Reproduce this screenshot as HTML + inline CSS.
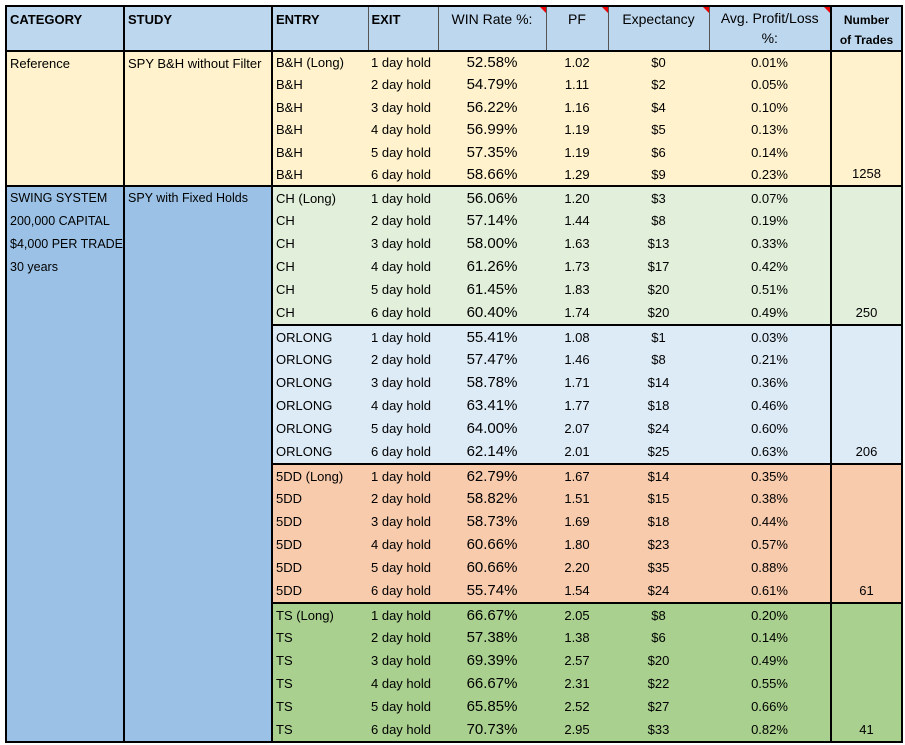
<!DOCTYPE html>
<html><head><meta charset="utf-8"><style>
html,body{margin:0;padding:0;background:#fff;width:905px;height:745px;overflow:hidden}
table{position:absolute;left:5px;top:5px;width:896px;border-collapse:collapse;table-layout:fixed;font-family:"Liberation Sans",sans-serif;font-size:13px;color:#000;border:2px solid #000}
td{padding:0 0 0 3px;white-space:nowrap;overflow:hidden;line-height:15px}
.h td{background:#bdd7ee;font-weight:bold;vertical-align:top;padding-top:5px;height:38px;border-left:1px solid #555;position:relative}
.h td.n{font-weight:normal;text-align:center;padding-left:0}
.h td.tri:after{content:"";position:absolute;right:0;top:0;border-top:6px solid #e00;border-left:6px solid transparent}
.tk{border-left:2px solid #000!important}
.g{border-top:2px solid #000}
.c{text-align:center;padding-left:0;font-size:13px}
.w{text-align:center;padding-left:0;font-size:15px}
.nb{text-align:center;padding-left:0;vertical-align:bottom;padding-bottom:4px;border-left:2px solid #000;font-size:13px}
td.cat{vertical-align:top;background:#9bc2e6!important;border-left:2px solid #000;padding-top:4px;font-size:12.5px}
.cat div{height:23px;line-height:15px}
.y td{background:#fff2cc}.gr td{background:#e2efda}.bl td{background:#ddebf7}.or td{background:#f8cbad}.gn td{background:#a9d08e}
</style></head><body>
<table>
<colgroup><col style="width:118px"><col style="width:148px"><col style="width:96px"><col style="width:70px"><col style="width:108px"><col style="width:62px"><col style="width:101px"><col style="width:122px"><col style="width:71px"></colgroup>
<tr class="h"><td style="border-left:none">CATEGORY</td><td class="tk">STUDY</td><td class="tk">ENTRY</td><td>EXIT</td><td class="n tri" style="font-size:14px">WIN Rate %:</td><td class="n tri" style="font-size:14px">PF</td><td class="n tri" style="font-size:14px">Expectancy</td><td class="n tri" style="font-size:14px;line-height:20px;padding-top:1px">Avg. Profit/Loss<br>%:</td><td class="tk" style="text-align:center;padding:3px 0 0;font-size:12px;line-height:20px">Number<br>of Trades</td></tr>
<tr class="y g" style="height:22px"><td rowspan="6" style="vertical-align:top;padding-top:4px">Reference</td><td rowspan="6" class="tk" style="vertical-align:top;padding-top:4px">SPY B&amp;H without Filter</td><td class="tk">B&amp;H (Long)</td><td>1 day hold</td><td class="w">52.58%</td><td class="c">1.02</td><td class="c">$0</td><td class="c">0.01%</td><td rowspan="6" class="nb">1258</td></tr>
<tr class="y" style="height:23px"><td class="tk">B&amp;H</td><td>2 day hold</td><td class="w">54.79%</td><td class="c">1.11</td><td class="c">$2</td><td class="c">0.05%</td></tr>
<tr class="y" style="height:22px"><td class="tk">B&amp;H</td><td>3 day hold</td><td class="w">56.22%</td><td class="c">1.16</td><td class="c">$4</td><td class="c">0.10%</td></tr>
<tr class="y" style="height:23px"><td class="tk">B&amp;H</td><td>4 day hold</td><td class="w">56.99%</td><td class="c">1.19</td><td class="c">$5</td><td class="c">0.13%</td></tr>
<tr class="y" style="height:22px"><td class="tk">B&amp;H</td><td>5 day hold</td><td class="w">57.35%</td><td class="c">1.19</td><td class="c">$6</td><td class="c">0.14%</td></tr>
<tr class="y" style="height:23px"><td class="tk">B&amp;H</td><td>6 day hold</td><td class="w">58.66%</td><td class="c">1.29</td><td class="c">$9</td><td class="c">0.23%</td></tr>

<tr class="gr g" style="height:23px"><td rowspan="24" class="cat" style="border-left:none"><div>SWING SYSTEM</div><div>200,000 CAPITAL</div><div>$4,000 PER TRADE</div><div>30 years</div></td><td rowspan="24" class="cat"><div>SPY with Fixed Holds</div></td><td class="tk">CH (Long)</td><td>1 day hold</td><td class="w">56.06%</td><td class="c">1.20</td><td class="c">$3</td><td class="c">0.07%</td><td rowspan="6" class="nb">250</td></tr>
<tr class="gr" style="height:23px"><td class="tk">CH</td><td>2 day hold</td><td class="w">57.14%</td><td class="c">1.44</td><td class="c">$8</td><td class="c">0.19%</td></tr>
<tr class="gr" style="height:23px"><td class="tk">CH</td><td>3 day hold</td><td class="w">58.00%</td><td class="c">1.63</td><td class="c">$13</td><td class="c">0.33%</td></tr>
<tr class="gr" style="height:23px"><td class="tk">CH</td><td>4 day hold</td><td class="w">61.26%</td><td class="c">1.73</td><td class="c">$17</td><td class="c">0.42%</td></tr>
<tr class="gr" style="height:23px"><td class="tk">CH</td><td>5 day hold</td><td class="w">61.45%</td><td class="c">1.83</td><td class="c">$20</td><td class="c">0.51%</td></tr>
<tr class="gr" style="height:24px"><td class="tk">CH</td><td>6 day hold</td><td class="w">60.40%</td><td class="c">1.74</td><td class="c">$20</td><td class="c">0.49%</td></tr>

<tr class="bl g" style="height:23px"><td class="tk">ORLONG</td><td>1 day hold</td><td class="w">55.41%</td><td class="c">1.08</td><td class="c">$1</td><td class="c">0.03%</td><td rowspan="6" class="nb">206</td></tr>
<tr class="bl" style="height:23px"><td class="tk">ORLONG</td><td>2 day hold</td><td class="w">57.47%</td><td class="c">1.46</td><td class="c">$8</td><td class="c">0.21%</td></tr>
<tr class="bl" style="height:23px"><td class="tk">ORLONG</td><td>3 day hold</td><td class="w">58.78%</td><td class="c">1.71</td><td class="c">$14</td><td class="c">0.36%</td></tr>
<tr class="bl" style="height:23px"><td class="tk">ORLONG</td><td>4 day hold</td><td class="w">63.41%</td><td class="c">1.77</td><td class="c">$18</td><td class="c">0.46%</td></tr>
<tr class="bl" style="height:23px"><td class="tk">ORLONG</td><td>5 day hold</td><td class="w">64.00%</td><td class="c">2.07</td><td class="c">$24</td><td class="c">0.60%</td></tr>
<tr class="bl" style="height:24px"><td class="tk">ORLONG</td><td>6 day hold</td><td class="w">62.14%</td><td class="c">2.01</td><td class="c">$25</td><td class="c">0.63%</td></tr>

<tr class="or g" style="height:23px"><td class="tk">5DD (Long)</td><td>1 day hold</td><td class="w">62.79%</td><td class="c">1.67</td><td class="c">$14</td><td class="c">0.35%</td><td rowspan="6" class="nb">61</td></tr>
<tr class="or" style="height:23px"><td class="tk">5DD</td><td>2 day hold</td><td class="w">58.82%</td><td class="c">1.51</td><td class="c">$15</td><td class="c">0.38%</td></tr>
<tr class="or" style="height:23px"><td class="tk">5DD</td><td>3 day hold</td><td class="w">58.73%</td><td class="c">1.69</td><td class="c">$18</td><td class="c">0.44%</td></tr>
<tr class="or" style="height:23px"><td class="tk">5DD</td><td>4 day hold</td><td class="w">60.66%</td><td class="c">1.80</td><td class="c">$23</td><td class="c">0.57%</td></tr>
<tr class="or" style="height:23px"><td class="tk">5DD</td><td>5 day hold</td><td class="w">60.66%</td><td class="c">2.20</td><td class="c">$35</td><td class="c">0.88%</td></tr>
<tr class="or" style="height:24px"><td class="tk">5DD</td><td>6 day hold</td><td class="w">55.74%</td><td class="c">1.54</td><td class="c">$24</td><td class="c">0.61%</td></tr>

<tr class="gn g" style="height:23px"><td class="tk">TS (Long)</td><td>1 day hold</td><td class="w">66.67%</td><td class="c">2.05</td><td class="c">$8</td><td class="c">0.20%</td><td rowspan="6" class="nb">41</td></tr>
<tr class="gn" style="height:23px"><td class="tk">TS</td><td>2 day hold</td><td class="w">57.38%</td><td class="c">1.38</td><td class="c">$6</td><td class="c">0.14%</td></tr>
<tr class="gn" style="height:23px"><td class="tk">TS</td><td>3 day hold</td><td class="w">69.39%</td><td class="c">2.57</td><td class="c">$20</td><td class="c">0.49%</td></tr>
<tr class="gn" style="height:23px"><td class="tk">TS</td><td>4 day hold</td><td class="w">66.67%</td><td class="c">2.31</td><td class="c">$22</td><td class="c">0.55%</td></tr>
<tr class="gn" style="height:23px"><td class="tk">TS</td><td>5 day hold</td><td class="w">65.85%</td><td class="c">2.52</td><td class="c">$27</td><td class="c">0.66%</td></tr>
<tr class="gn" style="height:24px"><td class="tk">TS</td><td>6 day hold</td><td class="w">70.73%</td><td class="c">2.95</td><td class="c">$33</td><td class="c">0.82%</td></tr>
</table>
</body></html>
